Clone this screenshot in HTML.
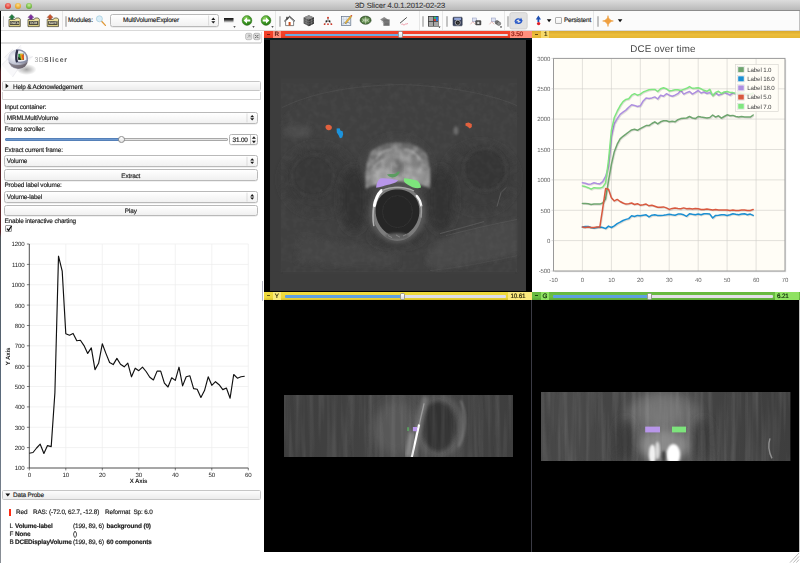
<!DOCTYPE html>
<html>
<head>
<meta charset="utf-8">
<title>3D Slicer 4.0.1.2012-02-23</title>
<style>
html,body{margin:0;padding:0;}
body{width:800px;height:563px;overflow:hidden;background:#fff;position:relative;font-family:"Liberation Sans",sans-serif;font-size:6.4px;letter-spacing:-0.14px;color:#1a1a1a;text-rendering:geometricPrecision;-webkit-text-stroke:0.16px;-webkit-font-smoothing:antialiased;}
.abs{position:absolute;}
.t{position:absolute;white-space:nowrap;line-height:8px;height:8px;}
#titlebar{left:0;top:0;width:800px;height:10px;background:linear-gradient(#dcdcdc,#b9b9b9);border-bottom:1px solid #8c8c8c;}
#title{left:0;width:800px;top:1px;text-align:center;font-size:7.55px;letter-spacing:0;color:#3a3a3a;text-shadow:0 0.6px 0 rgba(255,255,255,0.55);line-height:9px;height:9px;}
.light{position:absolute;top:2.5px;width:6px;height:6px;border-radius:50%;}
#toolbar{left:0;top:11px;width:800px;height:19px;background:#fbfbfb;border-bottom:1.7px solid #d9d9d9;}
.sep{position:absolute;top:16px;width:2px;height:11px;background:#c2c2c2;border-radius:1px;}
.tbdiv{position:absolute;top:11px;width:1px;height:19px;background:#e6e6e6;}
.combo{position:absolute;border:1px solid #b9b9b9;border-radius:2.5px;background:linear-gradient(#ffffff,#f1f1f1);box-sizing:border-box;box-shadow:0 0.5px 0.5px rgba(0,0,0,0.12);}
.combo .t{left:1.8px;top:2px;}
.btn{position:absolute;border:1px solid #b9b9b9;border-radius:2.5px;background:linear-gradient(#ffffff,#f0f0f0);box-sizing:border-box;text-align:center;line-height:9px;box-shadow:0 0.5px 0.5px rgba(0,0,0,0.12);}
.hdr{position:absolute;border:1px solid #c6c6c6;border-radius:1.5px;background:linear-gradient(#fcfcfc,#ececec);box-sizing:border-box;}
.bar{position:absolute;height:7px;}
.track{position:absolute;height:2px;border-radius:1px;}
.knob{position:absolute;width:5px;height:6px;border-radius:1.5px;background:linear-gradient(#fff,#ddd);border:0.5px solid #999;box-sizing:border-box;}
</style>
</head>
<body>
<!-- window title bar -->
<div id="titlebar" class="abs"></div>
<div class="light" style="left:5px;background:radial-gradient(circle at 50% 35%,#ff9a8f,#e0443a 60%,#b6322b);"></div>
<div class="light" style="left:15px;background:radial-gradient(circle at 50% 35%,#ffe08a,#e8a930 60%,#c08520);"></div>
<div class="light" style="left:25.5px;background:radial-gradient(circle at 50% 35%,#c8f09a,#74b844 60%,#548f2e);"></div>
<div id="title" class="t">3D Slicer 4.0.1.2012-02-23</div>

<!-- main toolbar -->
<div id="toolbar" class="abs"></div>
<div class="sep" style="left:2.8px;width:1.7px"></div>
<div class="sep" style="left:65px"></div>
<div class="tbdiv" style="left:62px"></div>
<div class="tbdiv" style="left:275px"></div>
<div class="sep" style="left:278.5px"></div>
<div class="tbdiv" style="left:419px"></div>
<div class="sep" style="left:421.5px"></div>
<div class="tbdiv" style="left:442px"></div>
<div class="sep" style="left:445.5px"></div>
<div class="tbdiv" style="left:504px"></div>
<div class="sep" style="left:506.5px"></div>
<div class="tbdiv" style="left:593px"></div>
<div class="sep" style="left:596.5px"></div>
<div class="t" style="left:68px;top:16.5px;">Modules:</div>
<div class="combo" style="left:109.5px;top:14px;width:109px;height:13px;"><div class="t" style="left:12.5px;top:2px;">MultiVolumeExplorer</div></div>
<div class="t" style="left:564px;top:16.5px;">Persistent</div>
<div class="abs" style="left:555px;top:17px;width:6.5px;height:6.5px;box-sizing:border-box;border:0.7px solid #b0b0b0;border-radius:1px;background:linear-gradient(#fff,#f0f0f0);"></div>
<!-- toolbar icons -->
<svg class="abs" style="left:0;top:0;will-change:transform" width="800" height="32" viewBox="0 0 800 32" font-family="Liberation Sans, sans-serif">
<defs>
<linearGradient id="fold" x1="0" y1="0" x2="0" y2="1"><stop offset="0" stop-color="#f3e9a6"/><stop offset="1" stop-color="#d6c878"/></linearGradient>
<radialGradient id="gball" cx="0.4" cy="0.3" r="0.8"><stop offset="0" stop-color="#9fdc6a"/><stop offset="0.5" stop-color="#3f9c24"/><stop offset="1" stop-color="#1f6a10"/></radialGradient>
<linearGradient id="lay" x1="0" y1="0" x2="0" y2="1"><stop offset="0" stop-color="#111"/><stop offset="0.35" stop-color="#3c3c3c"/><stop offset="0.8" stop-color="#e4e4e4"/><stop offset="1" stop-color="#fbfbfb"/></linearGradient>
<radialGradient id="brain" cx="0.5" cy="0.5" r="0.6"><stop offset="0" stop-color="#c4d8b4"/><stop offset="0.55" stop-color="#5f8a4c"/><stop offset="1" stop-color="#2c4a24"/></radialGradient>
<g id="folder">
  <path d="M0,3 L0,8.6 L11.3,8.6 L11.3,1.2 L10.2,0 L7.2,0 L6.2,1.4 L0,1.4 Z" fill="url(#fold)" stroke="#3b3a2b" stroke-width="0.7" stroke-linejoin="round"/>
  <rect x="1" y="3.1" width="9.3" height="3.8" fill="#3c3c38"/>
</g>
</defs>
<!-- DATA / DCM / SAVE -->
<g transform="translate(9,18)"><use href="#folder"/><text x="5.65" y="6.2" font-size="3.4" font-weight="bold" text-anchor="middle" fill="#f0ead0">DATA</text>
  <path d="M2.9,-3.6 L5.8,-0.6 L4.2,-0.6 L4.2,1.2 L1.6,1.2 L1.6,-0.6 L0,-0.6 Z" fill="#1f7c3f" stroke="#0f4a22" stroke-width="0.4"/></g>
<g transform="translate(28,18)"><use href="#folder"/><text x="5.65" y="6.2" font-size="3.4" font-weight="bold" text-anchor="middle" fill="#f0ead0">DCM</text>
  <path d="M2.9,-3.6 L5.8,-0.6 L4.2,-0.6 L4.2,1.2 L1.6,1.2 L1.6,-0.6 L0,-0.6 Z" fill="#7d2ea0" stroke="#4a1460" stroke-width="0.4"/></g>
<g transform="translate(47.2,18)"><use href="#folder"/><text x="5.65" y="6.2" font-size="3.4" font-weight="bold" text-anchor="middle" fill="#f0ead0">SAVE</text>
  <path d="M2.9,-3.6 L5.8,-0.6 L4.2,-0.6 L4.2,1.2 L1.6,1.2 L1.6,-0.6 L0,-0.6 Z" fill="#cc5228" stroke="#7a2a10" stroke-width="0.4"/></g>
<!-- magnifier -->
<line x1="101.6" y1="21.2" x2="105.4" y2="25.4" stroke="#e09a3a" stroke-width="1.3" stroke-linecap="round"/>
<circle cx="99.4" cy="18.8" r="3" fill="#d9eef8" stroke="#a9cfdf" stroke-width="0.8"/>
<!-- combo arrows -->
<line x1="208.6" y1="15.5" x2="208.6" y2="25.5" stroke="#d0d0d0" stroke-width="0.7"/>
<path d="M211.3,20 L213.3,17.6 L215.3,20 Z M211.3,21.2 L213.3,23.6 L215.3,21.2 Z" fill="#1a1a1a"/>
<!-- layout icon -->
<rect x="224" y="18" width="9.5" height="5.5" fill="url(#lay)"/>
<path d="M233.3,26.2 L235.7,26.2 L234.5,27.8 Z" fill="#222"/>
<!-- back / forward -->
<circle cx="247" cy="20.5" r="4.9" fill="url(#gball)" stroke="#2c6a18" stroke-width="0.4"/>
<path d="M243.6,20.5 L247,17.4 L247,19.6 L250.3,19.6 L250.3,21.4 L247,21.4 L247,23.6 Z" fill="#fff"/>
<path d="M252.3,26.2 L254.7,26.2 L253.5,27.8 Z" fill="#222"/>
<circle cx="266" cy="20.5" r="4.9" fill="url(#gball)" stroke="#2c6a18" stroke-width="0.4"/>
<path d="M269.4,20.5 L266,17.4 L266,19.6 L262.7,19.6 L262.7,21.4 L266,21.4 L266,23.6 Z" fill="#fff"/>
<path d="M271.3,26.2 L273.7,26.2 L272.5,27.8 Z" fill="#222"/>
<!-- home -->
<path d="M284.3,21.2 L289.6,16.3 L294.9,21.2" fill="none" stroke="#222" stroke-width="1" stroke-linejoin="round"/>
<path d="M285.6,21 L285.6,25.6 L293.6,25.6 L293.6,21 L289.6,17.4 Z" fill="#fff" stroke="#333" stroke-width="0.6"/>
<rect x="286.3" y="16.8" width="1.3" height="2.6" fill="#333"/>
<rect x="288.6" y="22" width="2" height="3.6" fill="#c8501e"/>
<!-- cube -->
<path d="M308.8,15.2 L314,17.4 L314,23.6 L308.8,26.2 L303.6,23.6 L303.6,17.4 Z" fill="#555"/>
<path d="M308.8,15.2 L314,17.4 L308.8,19.8 L303.6,17.4 Z" fill="#8a8a8a"/>
<path d="M308.8,19.8 L314,17.4 L314,23.6 L308.8,26.2 Z" fill="#3c3c3c"/>
<path d="M303.6,19.4 L308.8,21.9 L314,19.4 M303.6,21.5 L308.8,24 L314,21.5 M306.2,18.6 L306.2,24.9 M311.4,18.6 L311.4,24.9 M306.2,16.3 L311.4,18.6 M311.4,16.3 L306.2,18.6" stroke="#aaa" stroke-width="0.35" fill="none"/>
<!-- hierarchy -->
<path d="M328,18 L328,20.5 M325,23.6 L328,20.5 L331,23.6" stroke="#333" stroke-width="0.6" fill="none"/>
<circle cx="328" cy="17.8" r="1" fill="#d03a2a"/><circle cx="326.4" cy="21.2" r="0.9" fill="#222"/><circle cx="329.6" cy="21.2" r="0.9" fill="#222"/>
<circle cx="324.6" cy="24.2" r="0.9" fill="#d03a2a"/><circle cx="328" cy="24.2" r="0.9" fill="#d03a2a"/><circle cx="331.4" cy="24.2" r="0.9" fill="#d03a2a"/>
<!-- editor -->
<rect x="341.4" y="16.4" width="9.4" height="9.2" fill="#e7edf4" stroke="#5f6f86" stroke-width="0.7"/>
<path d="M342.5,24 L344.5,22.4 L346,23.8 L348,22 L350,23.4" stroke="#4a6a9a" stroke-width="0.6" fill="none"/>
<path d="M343.5,16.8 L343.5,25.2 M346.5,16.8 L346.5,25.2 M341.8,19.4 L350.4,19.4" stroke="#b8c4d4" stroke-width="0.4"/>
<path d="M345.2,22.2 L350.6,15.6 L351.8,16.6 L346.4,23.2 L344.8,23.8 Z" fill="#e8b23a" stroke="#8a6a1a" stroke-width="0.3"/>
<path d="M350.6,15.6 L351.8,16.6 L352.3,15.6 L351.4,14.9 Z" fill="#d0402a"/>
<!-- brain -->
<ellipse cx="365.6" cy="20.2" rx="5.5" ry="4.1" fill="url(#brain)" stroke="#2f4a28" stroke-width="0.6"/>
<path d="M365.6,16.6 L365.6,23.8 M362,18.6 L364,20.2 L362,22 M369.2,18.6 L367.2,20.2 L369.2,22" stroke="#e2efd8" stroke-width="0.5" fill="none"/>
<!-- models -->
<path d="M380.2,19.6 L384.2,17 L388,19.6 L384.2,22.4 Z" fill="#8a8a8a"/>
<path d="M383.4,19.4 L389.6,19.4 L389.6,25.8 L383.4,25.8 Z" fill="#6e6e6e"/>
<path d="M381.6,21.6 L385,24.2 M383.4,22 L389.6,22" stroke="#999" stroke-width="0.4"/>
<!-- annotation pen -->
<line x1="400" y1="23.2" x2="406.8" y2="17.4" stroke="#3a3a3a" stroke-width="0.9"/>
<path d="M401.4,24.4 C402.6,22.8 403.6,26.2 404.8,24.6 C405.6,23.4 406.6,24.6 408,23.4" stroke="#e0405a" stroke-width="0.5" fill="none"/>
<!-- layout grid -->
<rect x="428" y="16" width="10.6" height="10.6" fill="#3c3c3c"/>
<rect x="428.8" y="16.8" width="4.2" height="4.2" fill="#a6a6a6"/><rect x="433.8" y="21.8" width="4.2" height="4.2" fill="#a6a6a6"/><rect x="428.8" y="21.8" width="4.2" height="4.2" fill="#a6a6a6"/>
<rect x="433.8" y="16.8" width="4.2" height="4.2" fill="#2a7ad8"/><rect x="433.8" y="16.8" width="2.1" height="2.1" fill="#3fc05a"/><rect x="433.8" y="18.9" width="2.1" height="2.1" fill="#e03a2a"/>
<path d="M438.2,26.4 L440.6,26.4 L439.4,28 Z" fill="#222"/>
<!-- camera -->
<rect x="453" y="17.2" width="9.2" height="8.6" rx="0.8" fill="#3d4660" stroke="#222a3c" stroke-width="0.5"/>
<rect x="454.2" y="17.8" width="6.8" height="2.2" fill="#8fa2d6"/>
<circle cx="457.8" cy="22.7" r="2.5" fill="#1c1c1c" stroke="#d4d4d4" stroke-width="0.7"/><circle cx="457.8" cy="22.7" r="0.9" fill="#555"/>
<!-- scene view icons -->
<rect x="472.4" y="18" width="4" height="3.6" fill="#dfe3f4" stroke="#8a94b8" stroke-width="0.5"/>
<path d="M470.6,24.2 L472.8,21.6 L475,24.2" stroke="#c0392b" stroke-width="0.5" fill="none" stroke-dasharray="0.8 0.5"/>
<rect x="475.6" y="20.6" width="5.4" height="4.4" rx="0.6" fill="#555" stroke="#2a2a2a" stroke-width="0.4"/><circle cx="478.3" cy="22.9" r="1.2" fill="#ddd"/>
<rect x="491.4" y="18" width="4" height="3.6" fill="#dfe3f4" stroke="#8a94b8" stroke-width="0.5"/>
<path d="M489.6,24.2 L491.8,21.6 L494,24.2" stroke="#c0392b" stroke-width="0.5" fill="none" stroke-dasharray="0.8 0.5"/>
<circle cx="497" cy="22.4" r="1.9" fill="#777" stroke="#333" stroke-width="0.4"/><circle cx="498.8" cy="23.6" r="1.9" fill="#999" stroke="#333" stroke-width="0.4"/>
<path d="M499.8,26.4 L502.2,26.4 L501,28 Z" fill="#222"/>
<!-- crosshair (pressed) -->
<rect x="509.8" y="12.6" width="17.4" height="16.4" rx="2" fill="#e1e1e1" stroke="#c4c4c4" stroke-width="0.6"/>
<path d="M514.6,21.6 C514.6,18.4 518.4,17.2 520.4,19 L521,17.6 L522.6,21 L518.8,21 L519.6,19.9 C518.4,19 516.4,19.6 516.2,21.6 Z" fill="#2456c8"/>
<path d="M522.4,20.6 C522.4,23.8 518.6,25 516.6,23.2 L516,24.6 L514.4,21.2 L518.2,21.2 L517.4,22.3 C518.6,23.2 520.6,22.6 520.8,20.6 Z" fill="#2456c8"/>
<!-- mouse mode arrow -->
<path d="M538.4,15.6 L541,19.4 L539.3,19.4 L539.3,22 L537.5,22 L537.5,19.4 L535.8,19.4 Z" fill="#1f4fb0"/>
<circle cx="538.6" cy="23.6" r="1.7" fill="#e0202a"/>
<path d="M546.8,19.2 L551.4,19.2 L549.1,22.2 Z" fill="#111"/>
<!-- star -->
<path d="M608,15.6 Q608.6,20.4 613.4,21 Q608.6,21.6 608,26.6 Q607.4,21.6 602.6,21 Q607.4,20.4 608,15.6 Z" fill="#f0a040" stroke="#ea9a38" stroke-width="0.5"/>
<path d="M617.8,19.2 L622.4,19.2 L620.1,22.2 Z" fill="#111"/>
</svg>
<!-- window edges -->
<div class="abs" style="left:0;top:10.5px;width:1.1px;height:552.5px;background:linear-gradient(#000 0,#0a0a0a 10%,#4a1a1e 11%,#5c2428 40%,#50585e 41%,#5a6a7c 70%,#8a8f96 100%);"></div>
<!-- dock title row -->
<div class="abs" style="left:1px;top:42px;width:260.4px;height:1.5px;background:#dcdcdc;"></div>
<div class="abs" style="left:260.5px;top:31.6px;width:0.9px;height:11.6px;background:#dedede;"></div>
<svg class="abs" style="left:244px;top:32px" width="18" height="10" viewBox="0 0 18 10">
<rect x="1.6" y="1.3" width="6.2" height="6.4" rx="1.6" fill="#e0e0e0" stroke="#a4a4a4" stroke-width="0.6"/><path d="M3.4,5.9 L6,3.2 M3.8,3.2 L6,3.2 L6,5.4" stroke="#8a8a8a" stroke-width="0.6" fill="none"/>
<rect x="9.6" y="1.3" width="6.4" height="6.4" rx="1.6" fill="#dcdcdc" stroke="#9a9a9a" stroke-width="0.6"/><path d="M11.2,2.9 L14.4,6.1 M14.4,2.9 L11.2,6.1" stroke="#3a3a3a" stroke-width="0.9"/><path d="M12.8,2.2 L12.8,6.8 M10.4,4.5 L15.2,4.5" stroke="#f0f0f0" stroke-width="0.5" opacity="0.7"/>
</svg>
<!-- logo -->
<svg class="abs" style="left:2px;top:43px;will-change:transform" width="80" height="38" viewBox="2 43 80 38" font-family="Liberation Sans, sans-serif">
<defs>
<radialGradient id="sph" cx="0.3" cy="0.38" r="0.8"><stop offset="0" stop-color="#f4f6fb"/><stop offset="0.5" stop-color="#bcc0d0"/><stop offset="1" stop-color="#6a6674"/></radialGradient>
<radialGradient id="shd" cx="0.5" cy="0.5" r="0.5"><stop offset="0" stop-color="#000" stop-opacity="0.35"/><stop offset="1" stop-color="#000" stop-opacity="0"/></radialGradient>
</defs>
<path d="M1.6,65 L21,45.2 L24,60 L12.6,77 Z" fill="#ededf2" opacity="0.4"/>
<path d="M4.4,57.4 L12.6,49.4 L33,56.6 L20,72.6 Z" fill="#e4e4ec" opacity="0.3"/>
<path d="M1.6,65 L21,45.2 M4.4,57.4 L12.6,49.4 M12.6,77 L24,60 L33,56.6" stroke="#d4d4dc" stroke-width="0.4" fill="none"/>
<ellipse cx="26.5" cy="69.5" rx="10" ry="5.5" fill="url(#shd)"/>
<circle cx="18.1" cy="59.1" r="9.95" fill="url(#sph)"/>
<path d="M8.6,62 C12,70 24,71 27.6,62.4 C22,66 13,66 8.6,62 Z" fill="#5a4e54" opacity="0.55"/>
<path d="M16.4,49.4 C22.6,48.6 28.2,53.4 28,60.4 C24.6,62.8 20,63.4 16,62.6 C14.6,58.4 14.8,53.4 16.4,49.4 Z" fill="#8a90a8"/>
<path d="M16.4,49.4 C15,53.4 14.8,58.4 16,62.6 L18,61.8 C17.2,58 17.4,54 18.4,50.6 Z" fill="#2c2e46"/>
<path d="M18.4,50.8 C22.6,50.4 26.6,54 26.4,59.8 C23.6,61.6 20.6,62 18,61.6 C17.2,58 17.4,54 18.4,50.8 Z" fill="#eceef2"/>
<rect x="18.3" y="53.8" width="5.6" height="6" fill="#2a8a3a"/>
<path d="M20,53.8 L23.9,53.8 L23.9,59.8 L21,59.8 Z" fill="#e8b020"/>
<path d="M21.6,55 L23.9,54.6 L23.9,58.6 L22,58.4 Z" fill="#e05a20"/>
<path d="M22.8,53.8 L23.9,53.8 L23.9,55.2 Z" fill="#3a5ad0"/>
<path d="M18.3,56.4 L21.4,59.8 L18.3,59.8 Z" fill="#181818"/>
<path d="M23.2,58.4 L23.9,58 L23.9,59.8 L22.4,59.8 Z" fill="#c02a2a"/>
<text x="34.6" y="61.6" font-size="6.9" letter-spacing="0.3" fill="#9a9a9a">3D<tspan font-weight="bold" fill="#505050" letter-spacing="0.85">Slicer</tspan></text>
</svg>

<!-- Help & Acknowledgement -->
<div class="hdr" style="left:2px;top:81px;width:259px;height:10px;"></div>
<svg class="abs" style="left:4px;top:82px" width="8" height="8" viewBox="0 0 8 8"><path d="M1.6,1.6 L4.6,4 L1.6,6.4 Z" fill="#111"/></svg>
<div class="t" style="left:13px;top:83.5px;">Help &amp; Acknowledgement</div>
<div class="abs" style="left:2px;top:92px;width:259px;height:7.5px;box-sizing:border-box;border:1px solid #d4d4d4;border-top:none;border-radius:0 0 1.5px 1.5px;"></div>

<div class="t" style="left:4.5px;top:104.4px;">Input container:</div>
<div class="combo" style="left:4px;top:112px;width:253.6px;height:11.5px;"><div class="t">MRMLMultiVolume</div></div>
<div class="t" style="left:4.5px;top:126.0px;">Frame scroller:</div>
<div class="track" style="left:4.5px;top:138px;width:117px;height:2.6px;background:#6d99d0;border:0.5px solid #5580b8;box-sizing:border-box;"></div>
<div class="track" style="left:121px;top:138px;width:107px;height:2.6px;background:#e4e4e4;border:0.5px solid #a8a8a8;box-sizing:border-box;"></div>
<div class="abs" style="left:118.2px;top:135.9px;width:6.8px;height:6.8px;border-radius:50%;background:linear-gradient(#fff,#e2e2e2);border:0.6px solid #8c8c8c;box-sizing:border-box;"></div>
<div class="abs" style="left:229.3px;top:134.2px;width:28.3px;height:11.1px;box-sizing:border-box;border:1px solid #b2b2b2;border-radius:2.5px;background:linear-gradient(#fff,#f2f2f2);box-shadow:0 0.5px 0.5px rgba(0,0,0,0.12);"><div class="abs" style="left:0;top:0;width:20px;height:9.1px;background:#fff;border-right:0.7px solid #c4c4c4;border-radius:1.5px 0 0 1.5px;"></div><div class="t" style="left:2.2px;top:1.4px;">31.00</div></div>
<div class="t" style="left:4.5px;top:147.3px;">Extract current frame:</div>
<div class="combo" style="left:4px;top:155.4px;width:253.6px;height:11.5px;"><div class="t">Volume</div></div>
<div class="btn" style="left:4px;top:169.4px;width:253.6px;height:11.2px;line-height:13.4px;">Extract</div>
<div class="t" style="left:4.5px;top:182.3px;">Probed label volume:</div>
<div class="combo" style="left:4px;top:191.2px;width:253.6px;height:11.5px;"><div class="t">Volume-label</div></div>
<div class="btn" style="left:4px;top:204.6px;width:253.6px;height:11.2px;line-height:12.4px;">Play</div>
<div class="t" style="left:4.5px;top:218.1px;">Enable interactive charting</div>
<div class="abs" style="left:5.3px;top:225.2px;width:6.6px;height:6.6px;box-sizing:border-box;border:0.7px solid #9a9a9a;border-radius:1px;background:linear-gradient(#fff,#eee);"></div>
<svg class="abs" style="left:5px;top:224px" width="9" height="9" viewBox="0 0 9 9"><path d="M2,4.6 L3.6,6.4 L6.6,1.8" stroke="#111" stroke-width="1.2" fill="none"/></svg>
<!-- combo / spin arrows -->
<svg class="abs" style="left:244px;top:110px" width="18" height="96" viewBox="244 110 18 96">
<g fill="#1a1a1a">
<path d="M250.2,117.2 L252.2,114.9 L254.2,117.2 Z M250.2,118.3 L252.2,120.6 L254.2,118.3 Z"/>
<path d="M250.2,160.6 L252.2,158.3 L254.2,160.6 Z M250.2,161.7 L252.2,164.0 L254.2,161.7 Z"/>
<path d="M250.2,196.4 L252.2,194.1 L254.2,196.4 Z M250.2,197.5 L252.2,199.8 L254.2,197.5 Z"/>
<path d="M251.9,138.7 L253.9,136.2 L255.9,138.7 Z M251.9,140.8 L253.9,143.2 L255.9,140.8 Z"/>
</g>
<g stroke="#d0d0d0" stroke-width="0.7"><line x1="247" y1="113.4" x2="247" y2="122.4"/><line x1="247" y1="156.8" x2="247" y2="165.8"/><line x1="247" y1="192.6" x2="247" y2="201.6"/></g>
</svg>

<!-- Data probe -->
<div class="hdr" style="left:2px;top:489.6px;width:259px;height:10.4px;"></div>
<svg class="abs" style="left:4px;top:491px" width="8" height="8" viewBox="0 0 8 8"><path d="M1.4,2.4 L6.2,2.4 L3.8,5.6 Z" fill="#111"/></svg>
<div class="t" style="left:13px;top:491.7px;">Data Probe</div>
<div class="abs" style="left:9.3px;top:509.4px;width:1.6px;height:6.8px;background:#ff2a12;"></div>
<div class="t" style="left:16px;top:509.3px;">Red</div>
<div class="t" style="left:33px;top:509.3px;">RAS: (-72.0, 62.7, -12.8)</div>
<div class="t" style="left:105px;top:509.3px;">Reformat</div>
<div class="t" style="left:133.5px;top:509.3px;">Sp: 6.0</div>
<div class="t" style="left:9.5px;top:523.2px;">L</div><div class="t" style="left:15px;top:523.2px;font-weight:bold;">Volume-label</div><div class="t" style="left:73px;top:523.2px;">(199, 89, 6)</div><div class="t" style="left:106.6px;top:523.2px;font-weight:bold;">background (0)</div>
<div class="t" style="left:9.5px;top:530.8px;">F</div><div class="t" style="left:15px;top:530.8px;font-weight:bold;">None</div><div class="t" style="left:73px;top:530.8px;">()</div>
<div class="t" style="left:9.5px;top:538.6px;">B</div><div class="t" style="left:15px;top:538.6px;font-weight:bold;">DCEDisplayVolume</div><div class="t" style="left:73px;top:538.6px;">(199, 89, 6)</div><div class="t" style="left:106.6px;top:538.6px;font-weight:bold;">60 components</div>
<!-- left VTK chart -->
<svg class="abs" style="left:0;top:236px;will-change:transform" width="262" height="252" viewBox="0 236 262 252" font-family="Liberation Sans, sans-serif" font-size="6.1" fill="#222">
<path d="M65.8,244.0 L65.8,468.0 M102.3,244.0 L102.3,468.0 M138.8,244.0 L138.8,468.0 M175.3,244.0 L175.3,468.0 M211.8,244.0 L211.8,468.0 M248.3,244.0 L248.3,468.0 M29.3,447.6 L248.3,447.6 M29.3,427.3 L248.3,427.3 M29.3,406.9 L248.3,406.9 M29.3,386.5 L248.3,386.5 M29.3,366.2 L248.3,366.2 M29.3,345.8 L248.3,345.8 M29.3,325.5 L248.3,325.5 M29.3,305.1 L248.3,305.1 M29.3,284.7 L248.3,284.7 M29.3,264.4 L248.3,264.4 M29.3,244.0 L248.3,244.0" stroke="#ececec" stroke-width="0.7" fill="none"/>
<path d="M29.3,244.0 L29.3,468.0 L248.3,468.0" stroke="#222" stroke-width="0.8" fill="none"/>
<path d="M26.9,468.0 L29.3,468.0 M26.9,447.6 L29.3,447.6 M26.9,427.3 L29.3,427.3 M26.9,406.9 L29.3,406.9 M26.9,386.5 L29.3,386.5 M26.9,366.2 L29.3,366.2 M26.9,345.8 L29.3,345.8 M26.9,325.5 L29.3,325.5 M26.9,305.1 L29.3,305.1 M26.9,284.7 L29.3,284.7 M26.9,264.4 L29.3,264.4 M26.9,244.0 L29.3,244.0 M29.3,468.0 L29.3,470.4 M65.8,468.0 L65.8,470.4 M102.3,468.0 L102.3,470.4 M138.8,468.0 L138.8,470.4 M175.3,468.0 L175.3,470.4 M211.8,468.0 L211.8,470.4 M248.3,468.0 L248.3,470.4" stroke="#222" stroke-width="0.6" fill="none"/>
<text x="24.6" y="470.4" text-anchor="end">100</text>
<text x="24.6" y="450.0" text-anchor="end">200</text>
<text x="24.6" y="429.7" text-anchor="end">300</text>
<text x="24.6" y="409.3" text-anchor="end">400</text>
<text x="24.6" y="388.9" text-anchor="end">500</text>
<text x="24.6" y="368.6" text-anchor="end">600</text>
<text x="24.6" y="348.2" text-anchor="end">700</text>
<text x="24.6" y="327.9" text-anchor="end">800</text>
<text x="24.6" y="307.5" text-anchor="end">900</text>
<text x="24.6" y="287.1" text-anchor="end">1000</text>
<text x="24.6" y="266.8" text-anchor="end">1100</text>
<text x="24.6" y="246.4" text-anchor="end">1200</text>
<text x="29.3" y="476.6" text-anchor="middle">0</text>
<text x="65.8" y="476.6" text-anchor="middle">10</text>
<text x="102.3" y="476.6" text-anchor="middle">20</text>
<text x="138.8" y="476.6" text-anchor="middle">30</text>
<text x="175.3" y="476.6" text-anchor="middle">40</text>
<text x="211.8" y="476.6" text-anchor="middle">50</text>
<text x="248.3" y="476.6" text-anchor="middle">60</text>
<text x="138.6" y="482.6" text-anchor="middle" font-weight="bold" font-size="6.1">X Axis</text>
<text transform="translate(10.4,356.5) rotate(-90)" text-anchor="middle" font-weight="bold" font-size="6.1">Y Axis</text>
<polyline points="29.3,453.3 33.0,452.5 36.6,448.0 40.2,444.2 43.9,453.5 47.5,445.6 51.2,446.6 54.9,392.7 58.5,256.2 62.2,271.1 65.8,333.8 69.5,335.2 73.1,333.4 76.8,340.7 80.4,340.3 84.0,345.6 87.7,353.4 91.3,347.9 95.0,369.6 98.6,363.3 102.3,343.8 106.0,353.6 109.6,362.5 113.2,364.6 116.9,358.4 120.5,364.3 124.2,366.8 127.8,363.1 131.5,376.8 135.2,368.2 138.8,370.7 142.5,367.2 146.1,371.5 149.8,377.2 153.4,380.0 157.1,371.1 160.7,371.1 164.4,383.1 168.0,387.0 171.7,377.8 175.3,380.4 179.0,367.2 182.6,385.9 186.2,376.8 189.9,375.8 193.6,388.6 197.2,389.2 200.9,397.5 204.5,390.6 208.2,376.8 211.8,385.3 215.5,381.7 219.1,384.7 222.8,389.6 226.4,388.0 230.1,398.2 233.7,374.5 237.4,378.2 241.0,376.8 244.7,376.2" fill="none" stroke="#111" stroke-width="1.15" stroke-linejoin="round"/>
</svg>
<!-- slice views background -->
<div class="abs" style="left:264.4px;top:31px;width:535.6px;height:521.4px;background:#000;"></div>
<div class="abs" style="left:798.6px;top:11px;width:1.4px;height:552px;background:linear-gradient(90deg,#e8e8e8,#9a9a9a);"></div>
<!-- Red slice controller bar -->
<div class="bar" style="left:264.4px;top:31px;width:267.4px;height:7.2px;background:linear-gradient(#f5432c,#f03f27 70%,#d93a22);"></div>
<div class="abs" style="left:273px;top:31px;width:8px;height:7.2px;background:#ff8f7c;"></div>
<div class="abs" style="left:510px;top:31px;width:21.8px;height:7.2px;background:#ff8f7c;"></div>
<div class="abs" style="left:267px;top:34.2px;width:3px;height:1.2px;background:#7a1a10;"></div>
<div class="t" style="left:274.6px;top:31.2px;font-size:6.3px;color:#4a1410;">R</div>
<div class="t" style="left:511px;top:31.3px;font-size:6.5px;color:#8a1a10;">3.50</div>
<div class="track" style="left:285.4px;top:33.5px;width:115px;height:2.3px;background:#6aabe2;"></div>
<div class="track" style="left:400px;top:33.5px;width:108px;height:2.3px;background:#e2e0e6;"></div>
<div class="knob" style="left:397.6px;top:31.4px;height:6.8px;"></div>
<!-- Yellow bar -->
<div class="bar" style="left:264.4px;top:291.9px;width:267.4px;height:8.3px;background:linear-gradient(#f1dc3e,#ecd63a 70%,#d4be2c);"></div>
<div class="abs" style="left:273px;top:291.9px;width:8px;height:8.3px;background:#f8ea7c;"></div>
<div class="abs" style="left:508px;top:291.9px;width:23.8px;height:8.3px;background:#fbe97e;"></div>
<div class="abs" style="left:267px;top:295.2px;width:3px;height:1.2px;background:#6a5a10;"></div>
<div class="t" style="left:274.8px;top:293.2px;font-size:6.3px;color:#2a2408;">Y</div>
<div class="t" style="left:510.4px;top:293.2px;font-size:6.3px;color:#2a2408;">10.61</div>
<div class="track" style="left:285.4px;top:295.4px;width:117px;height:2.3px;background:#5f9fe0;"></div>
<div class="track" style="left:402px;top:295.4px;width:104px;height:2.3px;background:#dedeea;"></div>
<div class="knob" style="left:400.1px;top:292.5px;height:7.2px;"></div>
<!-- Chart view bar -->
<div class="bar" style="left:531.8px;top:30.8px;width:268.2px;height:7.2px;background:linear-gradient(#d9a92c,#ecbd3a 50%,#e6b734);"></div>
<div class="abs" style="left:541px;top:30.8px;width:8px;height:7.2px;background:#f6d96a;"></div>
<div class="abs" style="left:535px;top:34.2px;width:3px;height:1.2px;background:#6a4a10;"></div>
<div class="t" style="left:544px;top:31px;font-size:6.3px;color:#3a3008;">1</div>
<!-- Green bar -->
<div class="bar" style="left:531.8px;top:291.9px;width:268.2px;height:8.3px;background:linear-gradient(#67b83f,#6cc044 60%,#5aa636);"></div>
<div class="abs" style="left:540.8px;top:291.9px;width:8.2px;height:8.3px;background:#8fe262;"></div>
<div class="abs" style="left:774.5px;top:291.9px;width:24.2px;height:8.3px;background:#8fe262;"></div>
<div class="abs" style="left:534.6px;top:295.2px;width:3px;height:1.2px;background:#1f4a10;"></div>
<div class="t" style="left:542.4px;top:293.2px;font-size:6.3px;color:#0c2408;">G</div>
<div class="t" style="left:777px;top:293.2px;font-size:6.3px;color:#0c2408;">6.21</div>
<div class="track" style="left:553.3px;top:295.4px;width:96px;height:2.3px;background:#5f9fe0;"></div>
<div class="track" style="left:649px;top:295.4px;width:124px;height:2.3px;background:#e4dfe8;"></div>
<div class="knob" style="left:646.8px;top:292.5px;height:7.2px;"></div>
<!-- bottom status area -->
<div class="abs" style="left:262px;top:552.4px;width:538px;height:10.6px;background:#fff;"></div>
<svg class="abs" style="left:788px;top:552px" width="12" height="11" viewBox="0 0 12 11"><path d="M11,1 L2,10.6 M11,4.4 L5.4,10.6 M11,7.6 L8.4,10.6" stroke="#b8b8b8" stroke-width="1"/></svg>
<div class="abs" style="left:531.4px;top:300px;width:0.8px;height:252px;background:#3a3a44;"></div>
<div class="abs" style="left:261.8px;top:280.7px;width:1px;height:20.4px;background:#b8b8c4;"></div>
<!-- Red (axial) slice -->
<svg class="abs" style="left:270px;top:38.4px" width="256" height="253.2" viewBox="270 38.4 256 253.2">
<defs>
<filter id="b1" x="-20%" y="-20%" width="140%" height="140%"><feGaussianBlur stdDeviation="1"/></filter>
<filter id="b2" x="-20%" y="-20%" width="140%" height="140%"><feGaussianBlur stdDeviation="2.2"/></filter>
<filter id="b4" x="-30%" y="-30%" width="160%" height="160%"><feGaussianBlur stdDeviation="4.5"/></filter>
<filter id="b05" x="-20%" y="-20%" width="140%" height="140%"><feGaussianBlur stdDeviation="0.5"/></filter>
<radialGradient id="pro" cx="0.5" cy="0.8" r="0.8"><stop offset="0" stop-color="#a4a4a4"/><stop offset="0.6" stop-color="#7c7c7c"/><stop offset="1" stop-color="#626262"/></radialGradient>
<filter id="mrnoise" x="0" y="0" width="100%" height="100%"><feTurbulence type="fractalNoise" baseFrequency="0.16" numOctaves="2" seed="3"/><feColorMatrix type="matrix" values="0 0 0 0 1  0 0 0 0 1  0 0 0 0 1  1.8 0 0 0 -0.7"/></filter>
<clipPath id="cdome"><path d="M366,189 C365,176 366,162 370,154 C375,146 386,143 398,143 C410,143 421,146 426,154 C430,162 431,176 430,189 C420,184 408,182 398,182 C388,182 376,184 366,189 Z"/></clipPath>
<clipPath id="cax"><rect x="270" y="38.4" width="256" height="253.2"/></clipPath>
</defs>
<g clip-path="url(#cax)">
<rect x="270" y="38.4" width="256" height="253.2" fill="#3d3d3d"/>
<!-- body -->
<rect x="281" y="78.5" width="236" height="194" fill="#3f3f3f"/>
<path d="M281,128 C282,112 300,98 340,89 C380,84 430,84 465,90 C495,96 516,106 517,120 L517,272 L281,272 Z" fill="#414141" filter="url(#b1)"/>
<path d="M282,108 C310,94 350,86 400,85 C450,86 495,96 517,106" fill="none" stroke="#494949" stroke-width="1" filter="url(#b05)"/>
<!-- gluteal lighter region -->
<path d="M300,236 C340,240 370,250 398,254 L398,266 C360,268 320,266 296,262 Z" fill="#444" filter="url(#b2)"/>
<path d="M438,242 C460,232 490,224 517,220 L517,255 C490,260 465,266 440,270 C425,268 420,256 438,242 Z" fill="#494949" filter="url(#b2)"/>
<path d="M446,236 C470,230 495,224 517,220" stroke="#505050" stroke-width="1" fill="none" filter="url(#b05)"/>
<path d="M398,240 L398,264" stroke="#363636" stroke-width="2" filter="url(#b1)"/>
<path d="M430,271 C460,268 490,262 517,256" stroke="#4a4a4a" stroke-width="1" fill="none" filter="url(#b05)"/>
<!-- femoral heads / dark muscle -->
<ellipse cx="318" cy="180" rx="36" ry="34" fill="#3a3a3a" filter="url(#b4)"/>
<ellipse cx="480" cy="178" rx="36" ry="34" fill="#3a3a3a" filter="url(#b4)"/>
<circle cx="313" cy="176" r="21" fill="#383838" filter="url(#b2)"/>
<circle cx="313" cy="176" r="21" fill="none" stroke="#424242" stroke-width="1.2" filter="url(#b1)"/>
<circle cx="485" cy="170" r="21" fill="#363636" filter="url(#b2)"/>
<circle cx="485" cy="170" r="21.5" fill="none" stroke="#454545" stroke-width="1.2" filter="url(#b1)"/>
<ellipse cx="298" cy="132" rx="14" ry="7" fill="#4c4c4c" filter="url(#b2)"/>
<ellipse cx="354" cy="200" rx="14" ry="32" fill="#333" filter="url(#b4)"/>
<ellipse cx="441" cy="200" rx="14" ry="32" fill="#333" filter="url(#b4)"/>
<ellipse cx="397" cy="236" rx="26" ry="10" fill="#343434" filter="url(#b4)"/>
<path d="M506,188 L501,193 L497,207" stroke="#5a5a5a" stroke-width="1" fill="none" filter="url(#b05)"/>
<ellipse cx="456" cy="131" rx="2.4" ry="4" fill="#6a6a6a" filter="url(#b1)"/>
<path d="M440,234 C455,230 470,226 484,222" stroke="#565656" stroke-width="1" fill="none" filter="url(#b05)"/>
<!-- prostate glow -->
<ellipse cx="397" cy="168" rx="33" ry="29" fill="#4a4a4a" filter="url(#b4)"/>
<path d="M366,189 C365,176 366,162 370,154 C375,146 386,143 398,143 C410,143 421,146 426,154 C430,162 431,176 430,189 C420,184 408,182 398,182 C388,182 376,184 366,189 Z" fill="url(#pro)" filter="url(#b1)"/>
<ellipse cx="382" cy="177" rx="11" ry="8" fill="#9a9a9a" filter="url(#b2)"/>
<ellipse cx="414" cy="177" rx="11" ry="8" fill="#949494" filter="url(#b2)"/>
<ellipse cx="398" cy="158" rx="14" ry="9" fill="#868686" filter="url(#b2)"/>
<ellipse cx="398" cy="168" rx="4" ry="8" fill="#5e5e5e" filter="url(#b2)"/>
<path d="M376,160 C380,152 386,150 392,150 M404,150 C410,150 416,153 420,160 M372,172 C374,166 378,162 384,160" stroke="#a6a6a6" stroke-width="1.2" fill="none" filter="url(#b1)"/>
<g filter="url(#b1)" opacity="0.3"><g clip-path="url(#cdome)"><rect x="360" y="140" width="76" height="52" filter="url(#mrnoise)"/></g></g>
<rect x="281" y="84" width="236" height="188" filter="url(#mrnoise)" opacity="0.035"/>
<!-- endorectal coil -->
<ellipse cx="397.4" cy="214" rx="28" ry="29.4" fill="#585858" filter="url(#b2)"/>
<path d="M372.3,211 C372.3,196 383,186.8 397.3,186.8 C411.6,186.8 422.3,196 422.3,211 C422.3,226 412,241.2 397.3,241.2 C382.6,241.2 372.3,226 372.3,211 Z" fill="#7c7c7c" filter="url(#b05)"/>
<path d="M375.6,211.4 C375.6,198 385,190 397.5,190 C410,190 419.4,198 419.4,211.4 C419.4,224 410,236.6 397.5,236.6 C385,236.6 375.6,224 375.6,211.4 Z" fill="#272727" filter="url(#b05)"/>
<ellipse cx="397" cy="236.6" rx="12" ry="3.2" fill="#5e5e5e" filter="url(#b1)"/>
<path d="M388,236 L392,238 M396,235.4 L400,237.6 M403,236.4 L406,235" stroke="#8a8a8a" stroke-width="0.9" filter="url(#b05)"/>
<path d="M373.8,226 C372.6,220 372.8,213 374,206" stroke="#b4b4b4" stroke-width="1.5" fill="none" stroke-linecap="round" filter="url(#b05)"/>
<path d="M374.4,206 C375.6,199 378,194.4 381.4,191" stroke="#fff" stroke-width="3" fill="none" stroke-linecap="round" filter="url(#b05)"/>
<path d="M416.8,196.4 C419.2,199 420.6,202.4 421.2,206" stroke="#f4f4f4" stroke-width="2.4" fill="none" stroke-linecap="round" filter="url(#b05)"/>
<path d="M421.2,206 C421.8,210 421.6,214 421,218" stroke="#a0a0a0" stroke-width="1.2" fill="none" filter="url(#b05)"/>
<path d="M382,191 C391,186.6 405,186.6 414,191.4" stroke="#a8a8a8" stroke-width="1.2" fill="none" filter="url(#b05)"/>
<ellipse cx="397.5" cy="212" rx="15" ry="16" fill="none" stroke="#303030" stroke-width="1" filter="url(#b05)"/>
<!-- labels -->
<path d="M325.6,126.4 C327,124.6 330.4,125 331.8,127.2 C332.4,129.2 330.6,130.8 328.4,130.6 C326.4,130.2 325,128.4 325.6,126.4 Z" fill="#e2613e"/>
<path d="M336.6,129 L339.6,128.6 L340.4,131 L342.6,131.6 L343.2,134.6 L342.2,138 L340,138.6 L338.6,135.6 L336.8,133 Z" fill="#1c93dc"/>
<path d="M465.6,123.6 L468.6,122.8 L471.8,124.4 L471.8,127.4 L469.8,128.8 L467.4,127 L465.4,126 Z" fill="#e2613e"/>
<path d="M387,175 C390,173.4 394,175.6 396.2,173.4 C397.6,172 399,171.6 399.8,172.4 C399,175.4 396,177.6 392.4,177.8 C390,177.8 388,176.6 387,175 Z" fill="#5b9c60"/>
<path d="M376.2,188.2 C376.4,184 378,180 380.4,178.8 C386,178.2 393,179.4 398,180.4 C397,183 392,184.2 388,185.2 C384,186.2 380,187.6 376.2,188.2 Z" fill="#b896ea"/>
<path d="M404,178.6 C408,179 413,179.6 417,181 C419.4,182.8 421,185.6 421,188 C418,189 414,188.6 411,187 C408,185 405,183.6 404,181.6 Z" fill="#7de47c"/>
</g>
</svg>

<div class="abs" style="left:264.4px;top:38.2px;width:267.4px;height:1.4px;background:#0c1c20;"></div>
<!-- Yellow (sagittal) slice -->
<svg class="abs" style="left:283.5px;top:394.6px" width="229.5" height="62.6" viewBox="283.5 394.6 229.5 62.6">
<defs>
<linearGradient id="sagbg" x1="0" y1="0" x2="1" y2="0"><stop offset="0" stop-color="#3e3e3e"/><stop offset="0.35" stop-color="#424242"/><stop offset="0.5" stop-color="#4e4e4e"/><stop offset="0.8" stop-color="#424242"/><stop offset="1" stop-color="#3e3e3e"/></linearGradient>
<clipPath id="csag"><rect x="283.5" y="394.6" width="229.5" height="62.6"/></clipPath>
</defs>
<g clip-path="url(#csag)">
<rect x="283.5" y="394.6" width="229.5" height="62.6" fill="url(#sagbg)"/>
<ellipse cx="395" cy="428" rx="22" ry="26" fill="#585858" filter="url(#b4)"/>
<ellipse cx="439" cy="426" rx="26" ry="31" fill="#565656" filter="url(#b2)"/>
<ellipse cx="438" cy="426" rx="17.5" ry="25" fill="#303030" filter="url(#b2)"/>
<path d="M460,400 C466,410 466,430 458,446" stroke="#6e6e6e" stroke-width="2" fill="none" filter="url(#b1)"/>
<path d="M425,396 L412,458" stroke="#7a7a7a" stroke-width="5" filter="url(#b2)"/>
<path d="M423.6,403 L418.3,426" stroke="#9c9c9c" stroke-width="1.3" filter="url(#b05)"/>
<path d="M418.6,424 L411.2,457" stroke="#ffffff" stroke-width="2.2" filter="url(#b05)"/>
<path d="M412,432 L406.5,457" stroke="#8e8e8e" stroke-width="5" filter="url(#b2)"/>
<path d="M350,396 L348,457 M370,396 L369,457 M480,396 L481,457 M495,396 L496,457" stroke="#484848" stroke-width="1.4" filter="url(#b1)"/>
<rect x="283.5" y="394.6" width="229.5" height="62.6" filter="url(#streak)" opacity="0.12"/>
<rect x="412.4" y="426.6" width="4.2" height="4.2" fill="#b896ea"/>
<rect x="406.6" y="426.8" width="2" height="3.8" fill="#5b9c60"/>
</g>
</svg>

<!-- Green (coronal) slice -->
<svg class="abs" style="left:541px;top:391.6px" width="249.6" height="69" viewBox="541 391.6 249.6 69">
<defs>
<linearGradient id="corbg" x1="0" y1="0" x2="1" y2="0"><stop offset="0" stop-color="#444"/><stop offset="0.1" stop-color="#4a4a4a"/><stop offset="0.3" stop-color="#444"/><stop offset="0.5" stop-color="#565656"/><stop offset="0.7" stop-color="#424242"/><stop offset="1" stop-color="#3e3e3e"/></linearGradient>
<filter id="streak" x="0" y="0" width="100%" height="100%"><feTurbulence type="fractalNoise" baseFrequency="0.22 0.012" numOctaves="2" seed="7"/><feColorMatrix type="matrix" values="0 0 0 0 1  0 0 0 0 1  0 0 0 0 1  1.6 0 0 0 -0.62"/></filter>
<clipPath id="ccor"><rect x="541" y="391.6" width="249.6" height="69"/></clipPath>
</defs>
<g clip-path="url(#ccor)">
<rect x="541" y="391.6" width="249.6" height="69" fill="url(#corbg)"/>
<ellipse cx="663" cy="420" rx="38" ry="30" fill="#666" filter="url(#b4)"/>
<ellipse cx="662" cy="412" rx="22" ry="16" fill="#747474" filter="url(#b4)"/>
<ellipse cx="625" cy="440" rx="10" ry="22" fill="#3a3a3a" filter="url(#b4)"/>
<ellipse cx="703" cy="440" rx="10" ry="22" fill="#3a3a3a" filter="url(#b4)"/>
<ellipse cx="664" cy="446" rx="25" ry="16" fill="#868686" filter="url(#b4)"/>
<ellipse cx="673.4" cy="454.5" rx="6.8" ry="11" fill="#ffffff" filter="url(#b1)"/>
<ellipse cx="652.4" cy="454" rx="3.6" ry="10" fill="#f0f0f0" filter="url(#b1)"/>
<ellipse cx="657.5" cy="450" rx="2.4" ry="9" fill="#d8d8d8" filter="url(#b1)"/>

<ellipse cx="663.6" cy="456" rx="2" ry="6" fill="#3a3a3a" filter="url(#b1)"/>
<path d="M770,438 C768,444 769,452 772,458" stroke="#8c8c8c" stroke-width="1.4" fill="none" filter="url(#b05)"/>
<path d="M560,392 L561,460 M580,392 L580,460 M600,392 L601,460 M730,392 L729,460 M750,392 L750,460" stroke="#4c4c4c" stroke-width="2" filter="url(#b2)"/>
<rect x="541" y="391.6" width="249.6" height="69" filter="url(#streak)" opacity="0.14"/>
<rect x="645.2" y="426.2" width="14.8" height="5.8" fill="#b896ea"/>
<rect x="672" y="426.2" width="14" height="5.8" fill="#7de47c"/>
</g>
</svg>
<!-- DCE chart (jqPlot look) -->
<div class="abs" style="left:531.8px;top:38px;width:268.2px;height:253.9px;background:#fff;"></div>
<svg class="abs" style="left:532px;top:38px;will-change:transform" width="268" height="252" viewBox="532 38 268 252" font-family="Liberation Sans, sans-serif" font-size="6" fill="#666">
<rect x="554.7" y="59.6" width="231.5" height="212.6" fill="#000" opacity="0.12"/>
<rect x="553.5" y="58.4" width="231.5" height="212.6" fill="#fffdf6"/>
<path d="M582.4,58.4 L582.4,271.0 M611.4,58.4 L611.4,271.0 M640.3,58.4 L640.3,271.0 M669.2,58.4 L669.2,271.0 M698.2,58.4 L698.2,271.0 M727.1,58.4 L727.1,271.0 M756.1,58.4 L756.1,271.0 M553.5,88.8 L785.0,88.8 M553.5,119.1 L785.0,119.1 M553.5,149.5 L785.0,149.5 M553.5,179.9 L785.0,179.9 M553.5,210.3 L785.0,210.3 M553.5,240.6 L785.0,240.6" stroke="#cfcdc8" stroke-width="0.6" fill="none"/>
<rect x="553.5" y="58.4" width="231.5" height="212.6" fill="none" stroke="#999" stroke-width="1"/>
<path d="M551.5,58.4 L553.5,58.4 M551.5,88.8 L553.5,88.8 M551.5,119.1 L553.5,119.1 M551.5,149.5 L553.5,149.5 M551.5,179.9 L553.5,179.9 M551.5,210.3 L553.5,210.3 M551.5,240.6 L553.5,240.6 M551.5,271.0 L553.5,271.0" stroke="#bbb" stroke-width="0.6"/>
<text x="550.1" y="60.6" text-anchor="end">3000</text>
<text x="550.1" y="91.0" text-anchor="end">2500</text>
<text x="550.1" y="121.3" text-anchor="end">2000</text>
<text x="550.1" y="151.7" text-anchor="end">1500</text>
<text x="550.1" y="182.1" text-anchor="end">1000</text>
<text x="550.1" y="212.5" text-anchor="end">500</text>
<text x="550.1" y="242.8" text-anchor="end">0</text>
<text x="550.1" y="273.2" text-anchor="end">-500</text>
<text x="553.5" y="281.6" text-anchor="middle">-10</text>
<text x="582.4" y="281.6" text-anchor="middle">0</text>
<text x="611.4" y="281.6" text-anchor="middle">10</text>
<text x="640.3" y="281.6" text-anchor="middle">20</text>
<text x="669.2" y="281.6" text-anchor="middle">30</text>
<text x="698.2" y="281.6" text-anchor="middle">40</text>
<text x="727.1" y="281.6" text-anchor="middle">50</text>
<text x="756.1" y="281.6" text-anchor="middle">60</text>
<text x="785.0" y="281.6" text-anchor="middle">70</text>
<text x="662.9" y="51.7" text-anchor="middle" font-size="9.8" letter-spacing="0.12" fill="#4a4a4a">DCE over time</text>
<polyline points="582.4,203.5 585.3,203.5 588.2,203.7 591.1,204.5 594.0,204.1 596.9,204.1 599.8,204.1 602.7,203.0 605.6,198.8 608.5,180.7 611.4,164.4 614.3,151.7 617.2,144.2 620.1,138.9 623.0,136.3 625.9,134.2 628.7,132.0 631.6,129.9 634.5,129.3 637.4,130.3 640.3,128.6 643.2,127.1 646.1,125.6 649.0,125.6 651.9,123.5 654.8,121.8 657.7,123.9 660.6,121.8 663.5,120.7 666.4,120.7 669.3,121.8 672.2,121.2 675.0,121.8 677.9,119.7 680.8,118.6 683.7,118.2 686.6,118.0 689.5,116.5 692.4,118.0 695.3,118.6 698.2,116.5 701.1,117.1 704.0,117.5 706.9,118.0 709.8,117.5 712.7,115.0 715.6,117.1 718.5,115.8 721.4,118.2 724.2,116.5 727.1,114.8 730.0,115.8 732.9,115.4 735.8,116.5 738.7,117.1 741.6,116.5 744.5,116.9 747.4,117.1 750.3,117.1 753.2,115.0" fill="none" stroke="#000" stroke-opacity="0.12" stroke-width="1.6" transform="translate(0.7,0.8)" stroke-linejoin="round"/>
<polyline points="582.4,203.5 585.3,203.5 588.2,203.7 591.1,204.5 594.0,204.1 596.9,204.1 599.8,204.1 602.7,203.0 605.6,198.8 608.5,180.7 611.4,164.4 614.3,151.7 617.2,144.2 620.1,138.9 623.0,136.3 625.9,134.2 628.7,132.0 631.6,129.9 634.5,129.3 637.4,130.3 640.3,128.6 643.2,127.1 646.1,125.6 649.0,125.6 651.9,123.5 654.8,121.8 657.7,123.9 660.6,121.8 663.5,120.7 666.4,120.7 669.3,121.8 672.2,121.2 675.0,121.8 677.9,119.7 680.8,118.6 683.7,118.2 686.6,118.0 689.5,116.5 692.4,118.0 695.3,118.6 698.2,116.5 701.1,117.1 704.0,117.5 706.9,118.0 709.8,117.5 712.7,115.0 715.6,117.1 718.5,115.8 721.4,118.2 724.2,116.5 727.1,114.8 730.0,115.8 732.9,115.4 735.8,116.5 738.7,117.1 741.6,116.5 744.5,116.9 747.4,117.1 750.3,117.1 753.2,115.0" fill="none" stroke="#6fa56f" stroke-width="1.5" stroke-linejoin="round" stroke-linecap="round"/>
<polyline points="582.4,227.1 585.3,226.5 588.2,226.5 591.1,227.5 594.0,228.0 596.9,227.5 599.8,227.1 602.7,227.5 605.6,228.6 608.5,226.1 611.4,227.5 614.3,225.8 617.2,223.7 620.1,222.2 623.0,220.5 625.9,219.4 628.7,218.6 631.6,215.8 634.5,216.5 637.4,215.4 640.3,215.8 643.2,215.2 646.1,214.8 649.0,216.9 651.9,215.2 654.8,214.8 657.7,215.4 660.6,215.4 663.5,215.2 666.4,214.8 669.3,214.3 672.2,214.8 675.0,215.2 677.9,214.1 680.8,214.1 683.7,214.8 686.6,216.3 689.5,213.7 692.4,214.3 695.3,214.8 698.2,214.1 701.1,214.8 704.0,213.7 706.9,213.7 709.8,214.1 712.7,218.0 715.6,215.4 718.5,215.2 721.4,214.8 724.2,214.8 727.1,215.4 730.0,214.8 732.9,213.7 735.8,214.3 738.7,214.8 741.6,214.1 744.5,213.7 747.4,214.8 750.3,214.1 753.2,215.4" fill="none" stroke="#000" stroke-opacity="0.12" stroke-width="1.6" transform="translate(0.7,0.8)" stroke-linejoin="round"/>
<polyline points="582.4,227.1 585.3,226.5 588.2,226.5 591.1,227.5 594.0,228.0 596.9,227.5 599.8,227.1 602.7,227.5 605.6,228.6 608.5,226.1 611.4,227.5 614.3,225.8 617.2,223.7 620.1,222.2 623.0,220.5 625.9,219.4 628.7,218.6 631.6,215.8 634.5,216.5 637.4,215.4 640.3,215.8 643.2,215.2 646.1,214.8 649.0,216.9 651.9,215.2 654.8,214.8 657.7,215.4 660.6,215.4 663.5,215.2 666.4,214.8 669.3,214.3 672.2,214.8 675.0,215.2 677.9,214.1 680.8,214.1 683.7,214.8 686.6,216.3 689.5,213.7 692.4,214.3 695.3,214.8 698.2,214.1 701.1,214.8 704.0,213.7 706.9,213.7 709.8,214.1 712.7,218.0 715.6,215.4 718.5,215.2 721.4,214.8 724.2,214.8 727.1,215.4 730.0,214.8 732.9,213.7 735.8,214.3 738.7,214.8 741.6,214.1 744.5,213.7 747.4,214.8 750.3,214.1 753.2,215.4" fill="none" stroke="#1b8fd2" stroke-width="1.5" stroke-linejoin="round" stroke-linecap="round"/>
<polyline points="582.4,182.8 585.3,183.2 588.2,184.3 591.1,183.9 594.0,182.8 596.9,183.4 599.8,183.9 602.7,181.7 605.6,176.4 608.5,166.6 611.4,136.7 614.3,123.9 617.2,118.6 620.1,114.4 623.0,112.2 625.9,110.1 628.7,107.3 631.6,104.8 634.5,105.4 637.4,106.5 640.3,105.8 643.2,100.9 646.1,97.9 649.0,98.4 651.9,97.9 654.8,96.9 657.7,99.0 660.6,95.2 663.5,96.2 666.4,93.7 669.3,95.2 672.2,96.2 675.0,95.2 677.9,93.7 680.8,90.5 683.7,94.1 686.6,92.6 689.5,91.5 692.4,94.1 695.3,92.4 698.2,90.5 701.1,93.0 704.0,92.0 706.9,93.5 709.8,92.6 712.7,95.2 715.6,93.0 718.5,95.2 721.4,94.1 724.2,92.4 727.1,93.7 730.0,95.2 732.9,93.0 735.8,93.7 738.7,92.0 741.6,94.1 744.5,94.5 747.4,95.2 750.3,93.7 753.2,93.5" fill="none" stroke="#000" stroke-opacity="0.12" stroke-width="1.6" transform="translate(0.7,0.8)" stroke-linejoin="round"/>
<polyline points="582.4,182.8 585.3,183.2 588.2,184.3 591.1,183.9 594.0,182.8 596.9,183.4 599.8,183.9 602.7,181.7 605.6,176.4 608.5,166.6 611.4,136.7 614.3,123.9 617.2,118.6 620.1,114.4 623.0,112.2 625.9,110.1 628.7,107.3 631.6,104.8 634.5,105.4 637.4,106.5 640.3,105.8 643.2,100.9 646.1,97.9 649.0,98.4 651.9,97.9 654.8,96.9 657.7,99.0 660.6,95.2 663.5,96.2 666.4,93.7 669.3,95.2 672.2,96.2 675.0,95.2 677.9,93.7 680.8,90.5 683.7,94.1 686.6,92.6 689.5,91.5 692.4,94.1 695.3,92.4 698.2,90.5 701.1,93.0 704.0,92.0 706.9,93.5 709.8,92.6 712.7,95.2 715.6,93.0 718.5,95.2 721.4,94.1 724.2,92.4 727.1,93.7 730.0,95.2 732.9,93.0 735.8,93.7 738.7,92.0 741.6,94.1 744.5,94.5 747.4,95.2 750.3,93.7 753.2,93.5" fill="none" stroke="#ae8fe0" stroke-width="1.5" stroke-linejoin="round" stroke-linecap="round"/>
<polyline points="582.4,227.1 585.3,227.5 588.2,227.1 591.1,227.5 594.0,227.5 596.9,227.1 599.8,227.1 602.7,208.4 605.6,188.5 608.5,189.2 611.4,197.7 614.3,200.9 617.2,199.4 620.1,201.5 623.0,203.0 625.9,204.1 628.7,203.7 631.6,203.0 634.5,204.5 637.4,203.7 640.3,205.2 643.2,204.7 646.1,204.1 649.0,205.8 651.9,205.2 654.8,206.2 657.7,207.3 660.6,207.3 663.5,206.9 666.4,207.9 669.3,209.4 672.2,208.4 675.0,207.9 677.9,208.4 680.8,208.8 683.7,207.9 686.6,208.8 689.5,208.4 692.4,209.0 695.3,208.4 698.2,208.8 701.1,209.4 704.0,209.4 706.9,209.0 709.8,209.4 712.7,209.9 715.6,209.4 718.5,209.9 721.4,209.9 724.2,209.9 727.1,210.1 730.0,210.5 732.9,210.1 735.8,210.5 738.7,210.5 741.6,210.1 744.5,210.1 747.4,210.5 750.3,210.5 753.2,209.4" fill="none" stroke="#000" stroke-opacity="0.12" stroke-width="1.6" transform="translate(0.7,0.8)" stroke-linejoin="round"/>
<polyline points="582.4,227.1 585.3,227.5 588.2,227.1 591.1,227.5 594.0,227.5 596.9,227.1 599.8,227.1 602.7,208.4 605.6,188.5 608.5,189.2 611.4,197.7 614.3,200.9 617.2,199.4 620.1,201.5 623.0,203.0 625.9,204.1 628.7,203.7 631.6,203.0 634.5,204.5 637.4,203.7 640.3,205.2 643.2,204.7 646.1,204.1 649.0,205.8 651.9,205.2 654.8,206.2 657.7,207.3 660.6,207.3 663.5,206.9 666.4,207.9 669.3,209.4 672.2,208.4 675.0,207.9 677.9,208.4 680.8,208.8 683.7,207.9 686.6,208.8 689.5,208.4 692.4,209.0 695.3,208.4 698.2,208.8 701.1,209.4 704.0,209.4 706.9,209.0 709.8,209.4 712.7,209.9 715.6,209.4 718.5,209.9 721.4,209.9 724.2,209.9 727.1,210.1 730.0,210.5 732.9,210.1 735.8,210.5 738.7,210.5 741.6,210.1 744.5,210.1 747.4,210.5 750.3,210.5 753.2,209.4" fill="none" stroke="#d8593f" stroke-width="1.5" stroke-linejoin="round" stroke-linecap="round"/>
<polyline points="582.4,186.0 585.3,186.6 588.2,187.7 591.1,189.2 594.0,187.7 596.9,188.1 599.8,188.1 602.7,187.1 605.6,182.8 608.5,160.2 611.4,130.3 614.3,117.5 617.2,111.2 620.1,105.8 623.0,101.6 625.9,99.4 628.7,98.8 631.6,95.2 634.5,93.7 637.4,95.2 640.3,94.1 643.2,92.0 646.1,90.9 649.0,89.8 651.9,89.4 654.8,89.4 657.7,91.5 660.6,88.8 663.5,87.7 666.4,88.8 669.3,90.9 672.2,90.5 675.0,89.8 677.9,89.8 680.8,90.5 683.7,89.4 686.6,88.3 689.5,86.6 692.4,88.3 695.3,88.1 698.2,87.7 701.1,88.8 704.0,90.3 706.9,91.3 709.8,89.4 712.7,95.8 715.6,92.4 718.5,91.3 721.4,93.5 724.2,92.0 727.1,91.5 730.0,92.4 732.9,92.6 735.8,93.5 738.7,92.4 741.6,93.0 744.5,93.5 747.4,94.1 750.3,94.5 753.2,93.0" fill="none" stroke="#000" stroke-opacity="0.12" stroke-width="1.6" transform="translate(0.7,0.8)" stroke-linejoin="round"/>
<polyline points="582.4,186.0 585.3,186.6 588.2,187.7 591.1,189.2 594.0,187.7 596.9,188.1 599.8,188.1 602.7,187.1 605.6,182.8 608.5,160.2 611.4,130.3 614.3,117.5 617.2,111.2 620.1,105.8 623.0,101.6 625.9,99.4 628.7,98.8 631.6,95.2 634.5,93.7 637.4,95.2 640.3,94.1 643.2,92.0 646.1,90.9 649.0,89.8 651.9,89.4 654.8,89.4 657.7,91.5 660.6,88.8 663.5,87.7 666.4,88.8 669.3,90.9 672.2,90.5 675.0,89.8 677.9,89.8 680.8,90.5 683.7,89.4 686.6,88.3 689.5,86.6 692.4,88.3 695.3,88.1 698.2,87.7 701.1,88.8 704.0,90.3 706.9,91.3 709.8,89.4 712.7,95.8 715.6,92.4 718.5,91.3 721.4,93.5 724.2,92.0 727.1,91.5 730.0,92.4 732.9,92.6 735.8,93.5 738.7,92.4 741.6,93.0 744.5,93.5 747.4,94.1 750.3,94.5 753.2,93.0" fill="none" stroke="#80e680" stroke-width="1.5" stroke-linejoin="round" stroke-linecap="round"/>
<rect x="735.6" y="64.4" width="42.6" height="47.2" fill="#fffdf6" fill-opacity="0.85" stroke="#d4d2cc" stroke-width="0.6"/>
<rect x="737.6" y="66.5" width="6.8" height="6.2" fill="#fff" stroke="#d0d0d0" stroke-width="0.4"/>
<rect x="738.2" y="67.1" width="5.6" height="5" fill="#6fa56f"/>
<text x="747.3" y="71.8" font-size="6.15" fill="#444">Label 1.0</text>
<rect x="737.6" y="75.7" width="6.8" height="6.2" fill="#fff" stroke="#d0d0d0" stroke-width="0.4"/>
<rect x="738.2" y="76.3" width="5.6" height="5" fill="#1b8fd2"/>
<text x="747.3" y="81.0" font-size="6.15" fill="#444">Label 16.0</text>
<rect x="737.6" y="84.8" width="6.8" height="6.2" fill="#fff" stroke="#d0d0d0" stroke-width="0.4"/>
<rect x="738.2" y="85.4" width="5.6" height="5" fill="#ae8fe0"/>
<text x="747.3" y="90.1" font-size="6.15" fill="#444">Label 18.0</text>
<rect x="737.6" y="94.0" width="6.8" height="6.2" fill="#fff" stroke="#d0d0d0" stroke-width="0.4"/>
<rect x="738.2" y="94.6" width="5.6" height="5" fill="#d8593f"/>
<text x="747.3" y="99.3" font-size="6.15" fill="#444">Label 5.0</text>
<rect x="737.6" y="103.2" width="6.8" height="6.2" fill="#fff" stroke="#d0d0d0" stroke-width="0.4"/>
<rect x="738.2" y="103.8" width="5.6" height="5" fill="#80e680"/>
<text x="747.3" y="108.5" font-size="6.15" fill="#444">Label 7.0</text>
</svg>
</body>
</html>
